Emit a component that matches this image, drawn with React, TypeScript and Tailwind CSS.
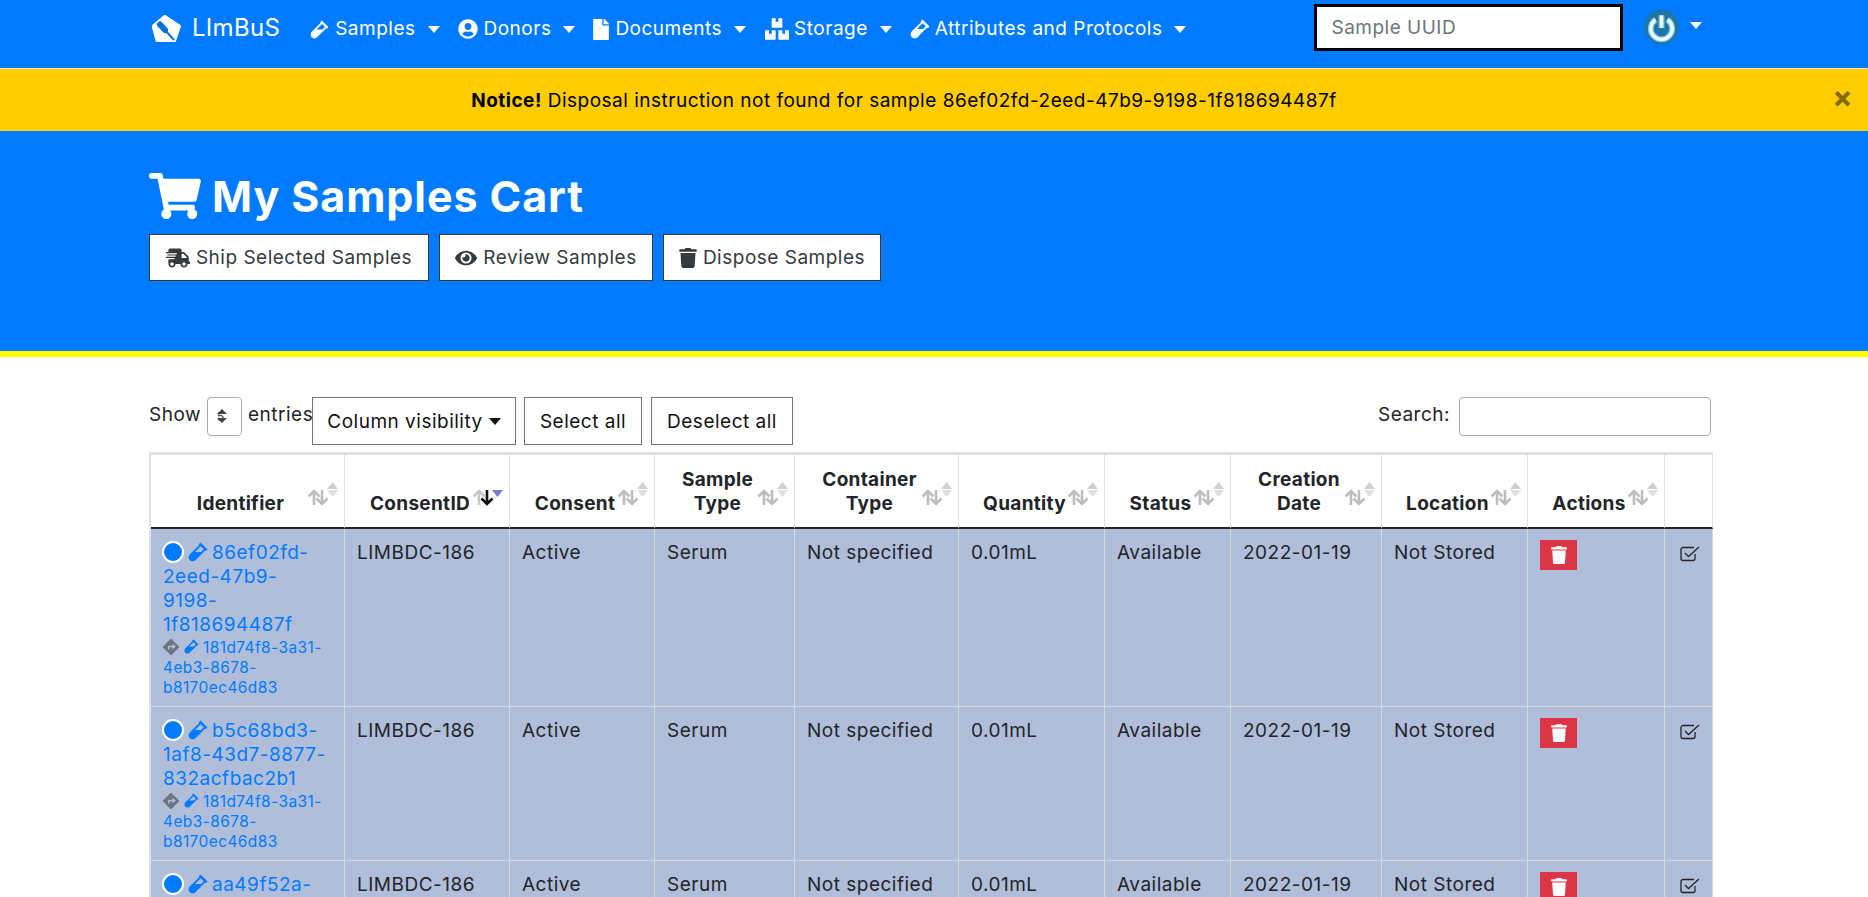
// Samples cart page: navbar, notice, jumbotron header and the datatable.
import { FaBoxes, FaDirections, FaEye, FaFile, FaShippingFast, FaShoppingCart, FaTrash, FaUserCircle, FaVial } from 'react-icons/fa'
import type { ReactNode } from 'react'

function Caret({ className = 'border-t-white' }: { className?: string }) {
  return <span className={`inline-block h-0 w-0 border-x-[6px] border-t-[7px] border-x-transparent ${className}`} />
}

function NavItem({ icon, label, gap, mr }: { icon: ReactNode; label: string; gap: string; mr: string }) {
  return (
    <div className={`flex items-center text-white ${mr}`}>
      <span className={`flex items-center ${gap}`}>
        {icon}
        {label}
      </span>
      <Caret className="ml-[12px] border-t-white" />
    </div>
  )
}

function SortIcon({ active }: { active?: boolean }) {
  return (
    <svg viewBox="0 0 31 24" className="absolute right-[6px] top-[27px] h-[24px] w-[31px]" aria-hidden>
      <g fill="none" strokeWidth="2.6">
        <path d="M7 23V9M1.5 14.5 7 9l5.5 5.5" stroke={active ? '#c8c8cc' : '#bdbdbd'} />
        <path d="M15 8v14M9.5 16.5 15 22l5.5-5.5" stroke={active ? '#111' : '#bdbdbd'} />
      </g>
      <path d="M25.5 0 31 7H20z" fill={active ? '#ffffff' : '#cfcfcf'} />
      <path d="M20 8h11l-5.5 7z" fill={active ? '#7676d6' : '#e0e0e0'} />
    </svg>
  )
}

const headers: { label: ReactNode; active?: boolean }[] = [
  { label: 'Identifier' },
  { label: 'ConsentID', active: true },
  { label: 'Consent' },
  { label: <>Sample<br />Type</> },
  { label: <>Container<br />Type</> },
  { label: 'Quantity' },
  { label: 'Status' },
  { label: <>Creation<br />Date</> },
  { label: 'Location' },
  { label: 'Actions' },
]

const rows = [
  { id: ['86ef02fd-', '2eed-47b9-', '9198-', '1f818694487f'], h: 'h-[178px]' },
  { id: ['b5c68bd3-', '1af8-43d7-8877-', '832acfbac2b1'], h: 'h-[154px]' },
  { id: ['aa49f52a-'], h: 'h-[154px]' },
]

const cellBase = 'border-r border-b border-[#d3d8e2] px-[12px] align-top'
const cell = `${cellBase} pt-[12px]`
const outlineBtn = 'flex h-[47px] items-center justify-center gap-[6px] border border-[#343a40] bg-white text-[#343a40]'

export default function App() {
  return (
    <div className="h-[897px] overflow-hidden bg-white font-['Inter',sans-serif] text-[19px] leading-6 tracking-[0.5px] text-[#212529]">
      <nav className="flex h-[68px] items-start bg-[#007bff] pl-[152px]">
        <svg viewBox="0 0 29 27" className="mt-[15px] h-[27px] w-[29px]" aria-hidden>
          <path d="M12.7 0 28.7 10.7 23.3 26.7H4.3L0 10.7z" fill="#fff" stroke="#fff" strokeLinejoin="round" />
          <path d="M8 9.5 13 15" stroke="#0a6fd8" strokeWidth="6" strokeLinecap="round" />
          <path d="M13 15 22 25" stroke="#0a6fd8" strokeWidth="2" />
        </svg>
        <span className="ml-[11px] mt-[12px] text-[24px] leading-[32px] tracking-[0.3px] text-white">LImBuS</span>
        <div className="ml-[30px] mt-[17px] flex h-[24px]">
          <NavItem icon={<FaVial className="h-[19px] w-[19px]" />} label="Samples" gap="gap-[6px]" mr="mr-[18px]" />
          <NavItem icon={<FaUserCircle className="h-[20px] w-[20px]" />} label="Donors" gap="gap-[6px]" mr="mr-[18px]" />
          <NavItem icon={<FaFile className="h-[21px] w-[16px]" />} label="Documents" gap="gap-[6px]" mr="mr-[19px]" />
          <NavItem icon={<FaBoxes className="h-[22px] w-[24px]" />} label="Storage" gap="gap-[5px]" mr="mr-[18px]" />
          <NavItem icon={<FaVial className="h-[20px] w-[20px]" />} label="Attributes and Protocols" gap="gap-[5px]" mr="" />
        </div>
        <input
          placeholder="Sample UUID"
          className="ml-[128px] mt-[4px] h-[47px] w-[309px] border-[3px] border-black bg-white px-[14px] outline-none placeholder:text-[#6c757d]"
        />
        <svg viewBox="0 0 36 36" className="ml-[21px] mt-[9px] h-[36px] w-[35px]" aria-hidden>
          <circle cx="18" cy="18" r="18" fill="#1f76a6" />
          <path d="M12 10.5a11 11 0 1 0 12 0" fill="none" stroke="#7cc8e6" strokeWidth="6" />
          <path d="M18 6v13" stroke="#7cc8e6" strokeWidth="6" />
          <path d="M12 10.5a11 11 0 1 0 12 0" fill="none" stroke="#f2fbff" strokeWidth="3.4" />
          <path d="M18 6v13" stroke="#f2fbff" strokeWidth="3.4" />
        </svg>
        <Caret className="ml-[11px] mt-[22px] border-t-white" />
      </nav>

      <div className="relative flex h-[63px] items-center justify-center border-t border-[#f5e6a8] bg-[#ffcc00] pr-[60px] pt-[2px] text-black">
        <span><strong className="font-bold">Notice!</strong> Disposal instruction not found for sample 86ef02fd-2eed-47b9-9198-1f818694487f</span>
        <span className="absolute right-[15px] top-[16px] text-[30px] font-bold text-[#7f6a10]">×</span>
      </div>

      <header className="h-[226px] border-b-[6px] border-[#ffff00] bg-[#007bff] pl-[149px] pt-[41px]">
        <div className="flex h-[48px] items-center text-white">
          <FaShoppingCart className="h-[46px] w-[52px]" />
          <h1 className="ml-[11px] text-[43px] font-bold leading-[48px] tracking-[0.9px]">My Samples Cart</h1>
        </div>
        <div className="mt-[14px] flex gap-[10px]">
          <button className={`${outlineBtn} w-[280px]`}><FaShippingFast className="h-[20px] w-[24px]" />Ship Selected Samples</button>
          <button className={`${outlineBtn} w-[214px]`}><FaEye className="h-[20px] w-[22px]" />Review Samples</button>
          <button className={`${outlineBtn} w-[218px]`}><FaTrash className="h-[20px] w-[18px]" />Dispose Samples</button>
        </div>
      </header>

      <main className="pl-[149px] pr-[157px] pt-[40px]">
        <div className="flex h-[55px] items-start">
          <span className="mt-[6px] w-[58px]">Show</span>
          <div className="relative flex h-[39px] w-[35px] items-center rounded-[4px] border border-[#aaa] pl-[9px] text-[12px] text-[#444]">
            5
            <svg viewBox="0 0 10 14" className="absolute left-[9px] top-[11px] h-[14px] w-[10px]" aria-hidden>
              <path d="M5 0l5 5H0zM0 9h10l-5 5z" fill="#444" />
            </svg>
          </div>
          <span className="ml-[6px] mt-[6px] w-[64px]">entries</span>
          <button className="flex h-[48px] w-[204px] items-center justify-center gap-[6px] border border-[#6c757d] pt-[1px] text-[#111]">Column visibility<Caret className="border-t-[#111]" /></button>
          <button className="ml-[8px] h-[48px] w-[118px] border border-[#6c757d] pt-[1px] text-[#111]">Select all</button>
          <button className="ml-[9px] h-[48px] w-[142px] border border-[#6c757d] pt-[1px] text-[#111]">Deselect all</button>
          <span className="ml-auto mt-[6px]">Search:</span>
          <input className="ml-[9px] h-[39px] w-[252px] rounded-[4px] border border-[#aaa] bg-white" />
        </div>

        <table className="w-[1563px] table-fixed border-separate border-spacing-0 border-t-[2px] border-l-2 border-[#dee2e6]">
          <colgroup>
            <col className="w-[194px]" />
            <col className="w-[165px]" />
            <col className="w-[145px]" />
            <col className="w-[140px]" />
            <col className="w-[164px]" />
            <col className="w-[146px]" />
            <col className="w-[126px]" />
            <col className="w-[151px]" />
            <col className="w-[146px]" />
            <col className="w-[137px]" />
            <col className="w-[48px]" />
          </colgroup>
          <thead>
            <tr className="h-[75px] bg-white">
              {headers.map((h, i) => (
                <th key={i} className="relative border-t border-r border-b-2 border-t-[#dee2e6] border-r-[#dee2e6] border-b-[#212529] pb-[11px] pl-[13px] pr-[27px] text-center align-bottom font-bold tracking-[0.3px]">
                  {h.label}
                  <SortIcon active={h.active} />
                </th>
              ))}
              <th className="border-t border-r border-b-2 border-t-[#dee2e6] border-r-[#dee2e6] border-b-[#212529]" />
            </tr>
          </thead>
          <tbody>
            {rows.map((r) => (
              <tr key={r.id[0]} className={`${r.h} bg-[#b0bed9]`}>
                <td className={cell}>
                  <div className="text-[#007bff]">
                    <span className="-ml-[1px] mr-[4px] inline-block h-[22px] w-[22px] rounded-full border-2 border-white bg-[#007bff] align-[-4px]" />
                    <FaVial className="mr-[4px] inline h-[20px] w-[20px] align-[-3px]" />
                    {r.id.map((line) => <span key={line}>{line}<br /></span>)}
                  </div>
                  <div className="mt-[1px] text-[15.5px] leading-5 tracking-[0.4px] text-[#007bff]">
                    <FaDirections className="mr-[5px] inline h-[16px] w-[16px] align-[-2px] text-[#6c757d]" />
                    <FaVial className="mr-[4px] inline h-[15px] w-[15px] align-[-1px]" />
                    181d74f8-3a31-<br />4eb3-8678-<br />b8170ec46d83
                  </div>
                </td>
                <td className={cell}>LIMBDC-186</td>
                <td className={cell}>Active</td>
                <td className={cell}>Serum</td>
                <td className={cell}>Not specified</td>
                <td className={cell}>0.01mL</td>
                <td className={cell}>Available</td>
                <td className={cell}>2022-01-19</td>
                <td className={cell}>Not Stored</td>
                <td className={`${cellBase} pt-[11px]`}>
                  <div className="flex h-[30px] w-[37px] items-center justify-center bg-[#dc3545] text-white"><FaTrash className="h-[18px] w-[16px]" /></div>
                </td>
                <td className={`${cellBase} pt-[11px]`}>
                  <svg viewBox="0 0 20 16" className="ml-[3px] mt-[6px] h-[16px] w-[20px]" fill="none" stroke="#212529" strokeWidth="1.3" aria-hidden>
                    <path d="M14 1.5H3a2 2 0 0 0-2 2v9a2 2 0 0 0 2 2h10a2 2 0 0 0 2-2V8" />
                    <path d="M5 7l3.5 3.5L19 1" />
                  </svg>
                </td>
              </tr>
            ))}
          </tbody>
        </table>
      </main>
    </div>
  )
}
